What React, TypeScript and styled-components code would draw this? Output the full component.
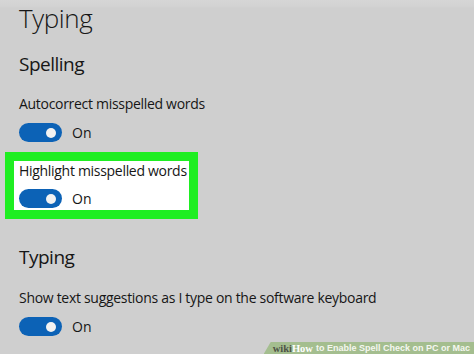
import React, { FC, ReactElement } from "react";
import styled, { createGlobalStyle } from "styled-components";

const GlobalStyle = createGlobalStyle`
  html, body {
    margin: 0;
    padding: 0;
  }
  body {
    background: #cfcfcf;
    font-family: "Open Sans", "Noto Sans", sans-serif;
    color: #161616;
  }
`;

const Page = styled.div`
  position: relative;
  box-sizing: border-box;
  width: 474px;
  height: 354px;
  overflow: hidden;
  padding: 2px 0 0 19px;
  display: flex;
  flex-direction: column;
  align-items: flex-start;
  background: linear-gradient(#d6d6d6 0, #d3d3d3 6px, #cfcfcf 8px);
`;

const PageTitle = styled.h1`
  margin: 0;
  font-size: 26px;
  line-height: 32px;
  font-weight: 300;
  letter-spacing: -0.4px;
`;

const SectionTitle = styled.h2<{ gap: number }>`
  margin: ${(p) => p.gap}px 0 0;
  font-size: 19px;
  line-height: 26px;
  font-weight: 400;
  letter-spacing: -0.5px;
`;

const SettingLabel = styled.div<{ gap: number }>`
  margin-top: ${(p) => p.gap}px;
  font-size: 14px;
  line-height: 20px;
  letter-spacing: -0.3px;
  white-space: nowrap;
`;

const ToggleRow = styled.div<{ gap: number }>`
  margin-top: ${(p) => p.gap}px;
  display: flex;
  align-items: center;
  gap: 10px;
  font-size: 14px;
  line-height: 19px;
`;

const Track = styled.span`
  position: relative;
  display: block;
  width: 43px;
  height: 19px;
  border-radius: 10px;
  background: #0c62b6;
`;

const Knob = styled.span`
  position: absolute;
  right: 6px;
  top: 4.5px;
  width: 10px;
  height: 10px;
  border-radius: 50%;
  background: #f2f2f2;
`;

const Highlight = styled.div`
  margin: 10px 0 0 -14px;
  border: 9px solid #1fee22;
  background: #ffffff;
  padding: 0 2px 2px 5px;
`;

const Watermark = styled.div`
  position: absolute;
  right: 0;
  bottom: 0;
  height: 12px;
  padding: 0 4px 0 9px;
  background: #a4be8f;
  clip-path: polygon(7px 0, 100% 0, 100% 100%, 0 100%);
  display: flex;
  align-items: center;
  white-space: nowrap;
  font-family: "Liberation Sans", Arial, sans-serif;
  font-weight: 700;
  font-size: 9px;
  color: #f4f7f0;
`;

const WikiMark = styled.span<{ dark?: boolean }>`
  font-family: "Liberation Serif", "Times New Roman", serif;
  font-weight: 700;
  font-size: 10.5px;
  color: ${(p) => (p.dark ? "#4e5346" : "#ffffff")};
  margin-right: ${(p) => (p.dark ? 0 : 3)}px;
`;

interface ToggleProps {
  gap: number;
}

const Toggle: FC<ToggleProps> = ({ gap }): ReactElement => (
  <ToggleRow gap={gap}>
    <Track>
      <Knob />
    </Track>
    On
  </ToggleRow>
);

const App: FC = (): ReactElement => {
  return (
    <>
      <GlobalStyle />
      <Page>
        <PageTitle>Typing</PageTitle>

        {/* Spelling */}
        <SectionTitle gap={17}>Spelling</SectionTitle>
        <SettingLabel gap={17}>Autocorrect misspelled words</SettingLabel>
        <Toggle gap={9} />

        <Highlight>
          <SettingLabel gap={0}>Highlight misspelled words</SettingLabel>
          <Toggle gap={8} />
        </Highlight>

        {/* Typing */}
        <SectionTitle gap={25}>Typing</SectionTitle>
        <SettingLabel gap={18}>
          Show text suggestions as I type on the software keyboard
        </SettingLabel>
        <Toggle gap={9} />

        <Watermark>
          <WikiMark dark>wiki</WikiMark>
          <WikiMark>How</WikiMark>
          to Enable Spell Check on PC or Mac
        </Watermark>
      </Page>
    </>
  );
};

export default App;
